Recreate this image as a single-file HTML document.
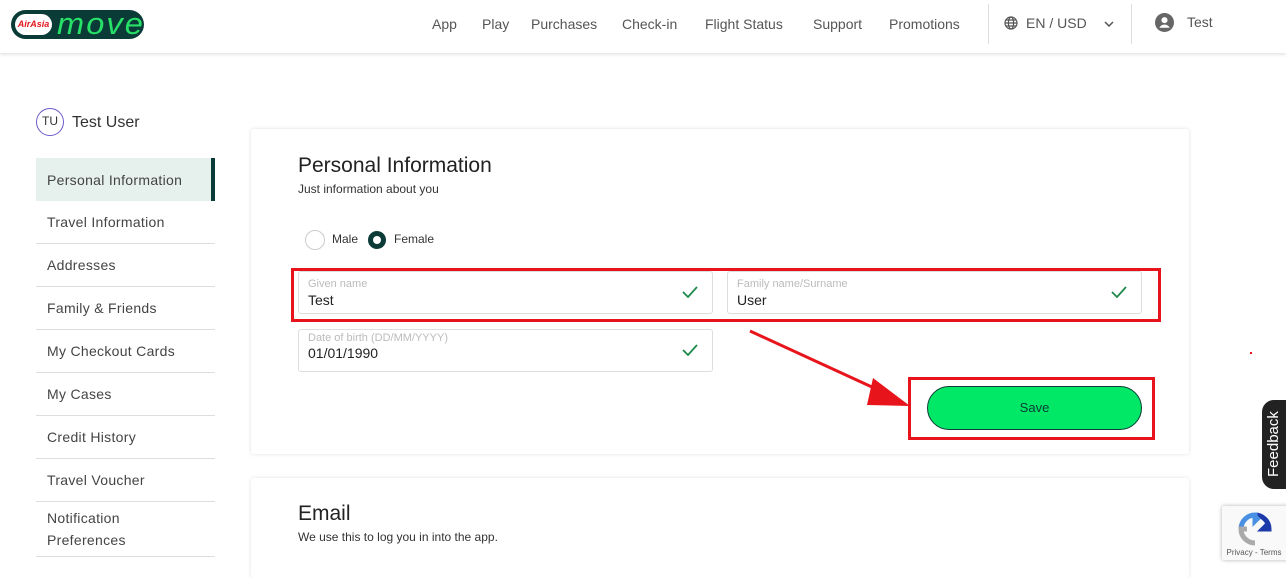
<!DOCTYPE html>
<html><head><meta charset="utf-8"><style>
*{box-sizing:border-box;margin:0;padding:0}
body{width:1286px;height:566px;overflow:hidden;background:#fff;font-family:"Liberation Sans",sans-serif;color:#333;position:relative}
.hdr{position:absolute;top:0;left:0;width:1286px;height:53px;background:#fff;box-shadow:0 1px 4px rgba(0,0,0,.15)}
.nav{position:absolute;top:16px;font-size:14px;color:#555}
.card{position:absolute;background:#fff;box-shadow:0 0 4px rgba(0,0,0,.12);border-radius:3px}
.side{position:absolute;left:36px;width:179px}
.si{height:43px;border-bottom:1px solid #ddd;font-size:14px;color:#444;padding-left:11px;display:flex;align-items:center;letter-spacing:.3px}
.fld{position:absolute;border:1px solid #ddd;border-radius:3px;height:43px;background:#fff}
.fld .l{position:absolute;left:9px;top:6px;font-size:11px;color:#bbb}
.fld .v{position:absolute;left:9px;top:20px;font-size:14px;color:#222}
.fld svg{position:absolute;right:14px;top:14px}
</style></head><body>
<div class="hdr">
 <div style="position:absolute;left:11px;top:10px;width:133px;height:29px;background:#0b3b36;border-radius:15px">
  <div style="position:absolute;left:4px;top:4px;width:37px;height:21px;background:#fff;border-radius:11px;color:#e5141b;font-size:9px;font-weight:bold;font-style:italic;text-align:center;line-height:21px">AirAsia</div>
  <div style="position:absolute;left:46px;top:-4px;color:#27e068;font-size:31px;font-style:italic;letter-spacing:2px;transform:scaleX(1.05);transform-origin:left">move</div>
 </div>
 <span class="nav" style="left:432px">App</span>
 <span class="nav" style="left:482px">Play</span>
 <span class="nav" style="left:531px">Purchases</span>
 <span class="nav" style="left:622px">Check-in</span>
 <span class="nav" style="left:705px">Flight Status</span>
 <span class="nav" style="left:813px">Support</span>
 <span class="nav" style="left:889px">Promotions</span>
 <div style="position:absolute;left:988px;top:4px;width:1px;height:40px;background:#ddd"></div>
 <svg style="position:absolute;left:1004px;top:16px" width="14" height="14" viewBox="0 0 14 14" fill="none" stroke="#555" stroke-width="1.2"><circle cx="7" cy="7" r="6"/><ellipse cx="7" cy="7" rx="2.6" ry="6"/><path d="M1 7h12M2 4h10M2 10h10"/></svg>
 <span class="nav" style="left:1026px;top:15px">EN / USD</span>
 <svg style="position:absolute;left:1104px;top:21px" width="10" height="6" viewBox="0 0 10 6"><path d="M1 1l4 4 4-4" stroke="#555" stroke-width="1.5" fill="none"/></svg>
 <div style="position:absolute;left:1131px;top:4px;width:1px;height:40px;background:#ddd"></div>
 <svg style="position:absolute;left:1155px;top:13px" width="19" height="19" viewBox="0 0 20 20"><circle cx="10" cy="10" r="10" fill="#666"/><circle cx="10" cy="7.5" r="3.2" fill="#fff"/><path d="M4.5 15.5c1.5-2.5 3.5-3.3 5.5-3.3s4 .8 5.5 3.3" fill="#fff"/></svg>
 <span class="nav" style="left:1187px;top:14px">Test</span>
</div>

<div style="position:absolute;left:36px;top:108px;width:28px;height:28px;border:1.5px solid #6a5acd;border-radius:50%;font-size:12px;text-align:center;line-height:25px;color:#333">TU</div>
<div style="position:absolute;left:72px;top:114px;font-size:16px;color:#333">Test User</div>
<div class="side" style="top:158px">
 <div class="si" style="background:#e6f0ec;border-right:4px solid #0b3b36;border-bottom:none;height:43px">Personal Information</div>
 <div class="si">Travel Information</div>
 <div class="si">Addresses</div>
 <div class="si">Family &amp; Friends</div>
 <div class="si">My Checkout Cards</div>
 <div class="si">My Cases</div>
 <div class="si">Credit History</div>
 <div class="si">Travel Voucher</div>
 <div class="si" style="height:55px;line-height:22px">Notification<br>Preferences</div>
</div>

<div class="card" style="left:251px;top:129px;width:938px;height:325px">
 <div style="position:absolute;left:47px;top:25px;font-size:21px;color:#222">Personal Information</div>
 <div style="position:absolute;left:47px;top:53px;font-size:12px;color:#333">Just information about you</div>
 <div style="position:absolute;left:54px;top:101px;width:20px;height:20px;border:1px solid #ccc;border-radius:50%"></div>
 <div style="position:absolute;left:81px;top:103px;font-size:12px">Male</div>
 <div style="position:absolute;left:117px;top:102px;width:18px;height:18px;border:5px solid #0b3b36;border-radius:50%;background:#fff"></div>
 <div style="position:absolute;left:143px;top:103px;font-size:12px">Female</div>
</div>
<div class="fld" style="left:298px;top:271px;width:415px"><span class="l">Given name</span><span class="v">Test</span><svg width="16" height="12" viewBox="0 0 16 12"><path d="M1 6l5 5 9-10" stroke="#1e8a4c" stroke-width="1.8" fill="none"/></svg></div>
<div class="fld" style="left:727px;top:271px;width:415px"><span class="l">Family name/Surname</span><span class="v">User</span><svg width="16" height="12" viewBox="0 0 16 12"><path d="M1 6l5 5 9-10" stroke="#1e8a4c" stroke-width="1.8" fill="none"/></svg></div>
<div class="fld" style="left:298px;top:329px;width:415px"><span class="l" style="top:2px">Date of birth (DD/MM/YYYY)</span><span class="v" style="top:15px">01/01/1990</span><svg width="16" height="12" viewBox="0 0 16 12"><path d="M1 6l5 5 9-10" stroke="#1e8a4c" stroke-width="1.8" fill="none"/></svg></div>
<div style="position:absolute;left:291px;top:268px;width:870px;height:54px;border:3px solid #e8141b"></div>
<div style="position:absolute;left:927px;top:386px;width:215px;height:44px;background:#00e865;border:1px solid #0b3b36;border-radius:22px;text-align:center;line-height:42px;font-size:13px;color:#0b3b36">Save</div>
<div style="position:absolute;left:908px;top:377px;width:247px;height:63px;border:3px solid #e8141b"></div>
<svg style="position:absolute;left:745px;top:328px" width="170" height="85" viewBox="0 0 170 85"><path d="M5 3L140 65" stroke="#e8141b" stroke-width="3"/><path d="M128 50L165 78 122 77z" fill="#e8141b"/></svg>

<div class="card" style="left:251px;top:478px;width:938px;height:100px">
 <div style="position:absolute;left:47px;top:24px;font-size:21px;color:#222">Email</div>
 <div style="position:absolute;left:47px;top:52px;font-size:12px;color:#333">We use this to log you in into the app.</div>
</div>

<div style="position:absolute;left:1262px;top:400px;width:24px;height:89px;background:#222;border-radius:12px 0 0 12px"></div>
<div style="position:absolute;left:1262px;top:400px;width:24px;height:89px;color:#fff;font-size:15px;writing-mode:vertical-rl;transform:rotate(180deg);text-align:center;line-height:24px">Feedback</div>
<div style="position:absolute;left:1222px;top:506px;width:70px;height:54px;background:#f9f9f9;box-shadow:0 0 4px rgba(0,0,0,.3);border-radius:2px">
 <svg style="position:absolute;left:16px;top:6px" width="34" height="34" viewBox="0 0 34 34"><path d="M17 3a14 14 0 0 1 14 14h-6l4-4" stroke="#1c3aa9" stroke-width="5" fill="none"/><path d="M3 17A14 14 0 0 1 17 3v6l4-4" stroke="#4a90e2" stroke-width="5" fill="none"/><path d="M17 31A14 14 0 0 1 3 17h6" stroke="#aaa" stroke-width="5" fill="none"/></svg>
 <div style="position:absolute;left:0;top:42px;width:64px;text-align:center;font-size:8px;color:#555">Privacy - Terms</div>
</div>
<div style="position:absolute;left:1250px;top:352px;width:2px;height:2px;background:#e8141b"></div>
</body></html>
